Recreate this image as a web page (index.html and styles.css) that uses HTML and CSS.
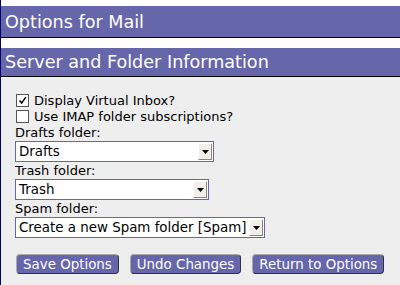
FILE: index.html
```html
<!doctype html>
<html lang="en">
<head>
    <meta charset="UTF-8">
    <title>Options for Mail</title>
    <link rel="stylesheet" href="styles.css">
</head>
<body>
    <header class="bar title">Options for Mail</header>

    <section class="panel">
        <h2 class="bar">Server and Folder Information</h2>
        <div class="content">
            <label class="check"><span class="box checked"><svg viewBox="0 0 13 13"><path d="M3 6.5 L5.5 9.5 L10.5 2.5" fill="none" stroke="#000" stroke-width="1.8"/></svg></span>Display Virtual Inbox?</label>
            <label class="check"><span class="box"></span>Use IMAP folder subscriptions?</label>

            <div class="field">Drafts folder:</div>
            <div class="select w-drafts"><span class="value">Drafts</span><span class="arrow"><svg viewBox="0 0 7 4"><path d="M0 0h7L3.5 4z"/></svg></span></div>

            <div class="field">Trash folder:</div>
            <div class="select w-trash"><span class="value">Trash</span><span class="arrow"><svg viewBox="0 0 7 4"><path d="M0 0h7L3.5 4z"/></svg></span></div>

            <div class="field">Spam folder:</div>
            <div class="select w-spam"><span class="value">Create a new Spam folder [Spam]</span><span class="arrow"><svg viewBox="0 0 7 4"><path d="M0 0h7L3.5 4z"/></svg></span></div>

            <div class="actions">
                <button>Save Options</button>
                <button>Undo Changes</button>
                <button>Return to Options</button>
            </div>
        </div>
    </section>
</body>
</html>
```

FILE: styles.css
```css
:root {
    --cl-bar: #6666aa;
    --cl-edge: #000066;
    --cl-panel: #eeeeee;
    --cl-text: #000000;
}

html, body {
    margin: 0;
    padding: 0;
    height: 100%;
    font-family: "DejaVu Sans", Verdana, sans-serif;
    color: var(--cl-text);
}

body {
    display: flex;
    flex-direction: column;
    border-left: solid 1px var(--cl-edge);
    padding-top: 6px;
    box-sizing: border-box;
    background: white;
}

.bar {
    background: var(--cl-bar);
    color: white;
    font-weight: normal;
    font-size: 17.6px;
    margin: 0;
    padding-left: 4px;
    display: flex;
    align-items: center;
    border-bottom: solid 1px black;
}

.title {
    height: 31px;
}

.panel {
    flex: 1;
    display: flex;
    flex-direction: column;
    margin-top: 10px;
}

.panel .bar {
    height: 28px;
}

.content {
    flex: 1;
    background: var(--cl-panel);
    padding: 15px 14px 0 14px;
    font-size: 13px;
}

.check {
    display: flex;
    align-items: center;
    height: 16px;
}

.box {
    width: 11px;
    height: 11px;
    border: solid 1px #555;
    background: white;
    margin: 0 5px 0 1px;
    display: flex;
}

.box svg {
    width: 100%;
    height: 100%;
}

.field {
    height: 17px;
    line-height: 17px;
}

.select {
    display: flex;
    align-items: center;
    height: 21px;
    box-sizing: border-box;
    border: solid 1px var(--cl-bar);
    background: white;
    padding: 0 1px 0 3px;
}

.w-drafts { width: 199px; }
.w-trash { width: 194px; }
.w-spam { width: 250px; }

.select .value {
    flex: 1;
    font-size: 13.4px;
    white-space: nowrap;
}

.arrow {
    width: 14px;
    height: 17px;
    margin-left: 2px;
    background: #f2efe8;
    border-right: solid 1px #888;
    border-bottom: solid 1px #888;
    border-top: solid 1px white;
    border-left: solid 1px white;
    box-sizing: border-box;
    display: flex;
    align-items: center;
    justify-content: center;
}

.arrow svg {
    width: 7px;
    height: 4px;
}

.actions {
    display: flex;
    gap: 11px;
    margin-top: 16px;
    padding-left: 1px;
}

button {
    font-family: "DejaVu Sans", Verdana, sans-serif;
    font-size: 13.4px;
    color: white;
    white-space: nowrap;
    background: var(--cl-bar);
    border: solid 1px #333;
    border-top-color: #aaa;
    border-left-color: #aaa;
    border-radius: 4px;
    height: 20px;
    padding: 0 6px;
}
```
